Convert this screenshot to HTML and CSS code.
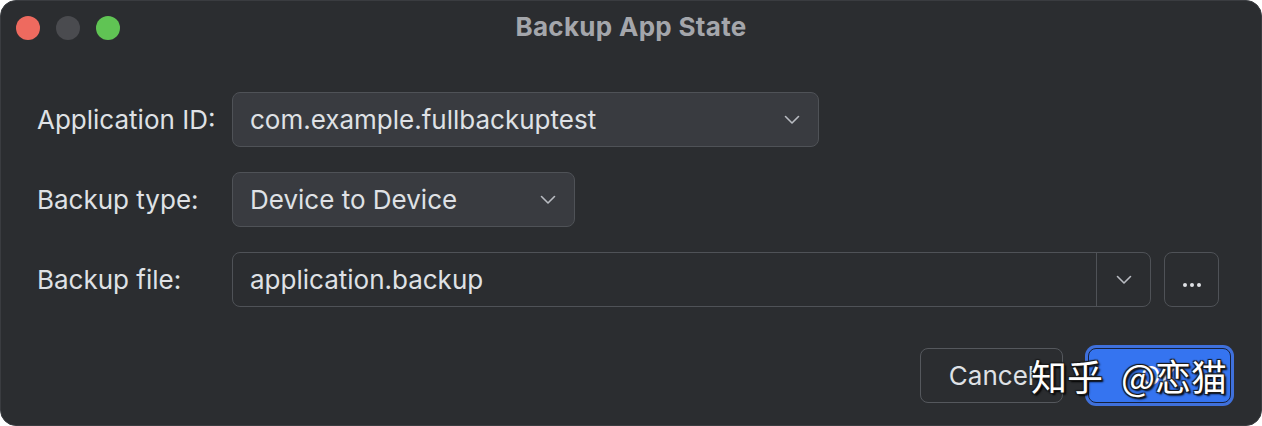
FILE: index.html
```html
<!DOCTYPE html>
<html lang="en">
<head>
<meta charset="utf-8">
<title>Backup App State</title>
<link rel="stylesheet" href="styles.css">
</head>
<body>
<div class="window">
  <div class="titlebar">
    <div class="lights">
      <span class="light red"></span>
      <span class="light gray"></span>
      <span class="light green"></span>
    </div>
    <div class="title">Backup App State</div>
  </div>

  <div class="form">
    <label class="label">Application ID:</label>
    <div class="field">
      <div class="combo combo-app">
        <span class="value">com.example.fullbackuptest</span>
        <svg class="chev" viewBox="0 0 16 10" width="16" height="10"><path d="M1.5 1.5 L8 8 L14.5 1.5" fill="none" stroke="#b9bcc2" stroke-width="1.6" stroke-linecap="round" stroke-linejoin="round"/></svg>
      </div>
    </div>

    <label class="label">Backup type:</label>
    <div class="field">
      <div class="combo combo-type">
        <span class="value">Device to Device</span>
        <svg class="chev" viewBox="0 0 16 10" width="16" height="10"><path d="M1.5 1.5 L8 8 L14.5 1.5" fill="none" stroke="#b9bcc2" stroke-width="1.6" stroke-linecap="round" stroke-linejoin="round"/></svg>
      </div>
    </div>

    <label class="label">Backup file:</label>
    <div class="field file-row">
      <div class="editable">
        <span class="value">application.backup</span>
        <span class="arrow-part">
          <svg class="chev" viewBox="0 0 16 10" width="16" height="10"><path d="M1.5 1.5 L8 8 L14.5 1.5" fill="none" stroke="#b9bcc2" stroke-width="1.6" stroke-linecap="round" stroke-linejoin="round"/></svg>
        </span>
      </div>
      <div class="browse">
        <span class="dot"></span><span class="dot"></span><span class="dot"></span>
      </div>
    </div>
  </div>

  <div class="footer">
    <button class="btn cancel">Cancel</button>
    <button class="btn ok">OK</button>
  </div>

  <div class="watermark">知乎<span class="wm-gap"></span>@恋猫</div>
</div>
</body>
</html>
```

FILE: styles.css
```css
* { box-sizing: border-box; }
html, body { margin: 0; padding: 0; background: #ffffff; }
body {
  width: 1262px;
  height: 426px;
  overflow: hidden;
  font-family: Inter, "Noto Sans", "Noto Sans CJK SC", sans-serif;
}
.window {
  position: relative;
  width: 1262px;
  height: 426px;
  background: #2b2d30;
  border-radius: 16px;
  overflow: hidden;
  border: 1px solid #3a3c40;
}
.titlebar {
  position: relative;
  height: 91px;
  display: flex;
  align-items: flex-start;
  justify-content: center;
}
.lights {
  position: absolute;
  left: 15px;
  top: 15px;
  display: flex;
  gap: 16px;
}
.light {
  width: 24px;
  height: 24px;
  border-radius: 50%;
  display: block;
}
.red { background: #ee6a5f; }
.gray { background: #4a4b4f; }
.green { background: #60c454; }
.title {
  margin-top: 10px;
  font-size: 26px;
  font-weight: 700;
  color: #a4a6ab;
  letter-spacing: 0.3px;
}
.form {
  display: grid;
  grid-template-columns: 195px 1fr;
  row-gap: 25px;
  padding: 0 42px 0 36px;
  align-items: center;
}
.label {
  font-size: 26px;
  color: #dfe1e5;
  white-space: nowrap;
}
.field { display: flex; height: 55px; }
.combo {
  display: flex;
  align-items: center;
  justify-content: space-between;
  height: 55px;
  background: #393b40;
  border: 1.5px solid #4f5257;
  border-radius: 8px;
  padding: 0 18px 0 17px;
}
.combo-app { width: 587px; }
.combo-type { width: 343px; }
.value {
  font-size: 26px;
  color: #dfe1e5;
  white-space: nowrap;
}
.chev { display: block; }
.file-row { gap: 13px; }
.editable {
  flex: 0 0 919px;
  display: flex;
  align-items: center;
  justify-content: space-between;
  height: 55px;
  border: 1.5px solid #4f5257;
  border-radius: 8px;
  padding-left: 17px;
}
.arrow-part {
  width: 54px;
  height: 100%;
  border-left: 1.5px solid #4f5257;
  display: flex;
  align-items: center;
  justify-content: center;
}
.browse {
  width: 55px;
  height: 55px;
  border: 1.5px solid #4f5257;
  border-radius: 8px;
  display: flex;
  align-items: center;
  justify-content: center;
  gap: 3px;
  padding-top: 10px;
}
.dot {
  width: 4px;
  height: 4px;
  border-radius: 50%;
  background: #dfe1e5;
  display: block;
}
.footer {
  display: flex;
  justify-content: flex-end;
  gap: 25px;
  padding: 0 30px 0 0;
  margin-top: 41px;
}
.btn {
  height: 55px;
  font-family: inherit;
  font-size: 26px;
  border-radius: 8px;
  cursor: default;
}
.cancel {
  width: 143px;
  background: transparent;
  color: #dfe1e5;
  border: 1.5px solid #55585d;
}
.ok {
  width: 143px;
  background: #3574f0;
  color: #ffffff;
  border: 1.5px solid #16223e;
  box-shadow: 0 0 0 3px #3f70db;
}
.watermark {
  position: absolute;
  left: 1030px;
  top: 348px;
  font-family: "Noto Sans CJK SC", "Noto Sans", sans-serif;
  font-size: 36px;
  line-height: 52px;
  color: #ffffff;
  white-space: nowrap;
  display: flex;
  align-items: center;
  text-shadow: 1px 1px 1px #1a1a1a, -1px -1px 1px #1a1a1a, 1px -1px 1px #1a1a1a, -1px 1px 1px #1a1a1a, 2px 2px 2px #000;
}
.wm-gap { display: inline-block; width: 18px; }
```
